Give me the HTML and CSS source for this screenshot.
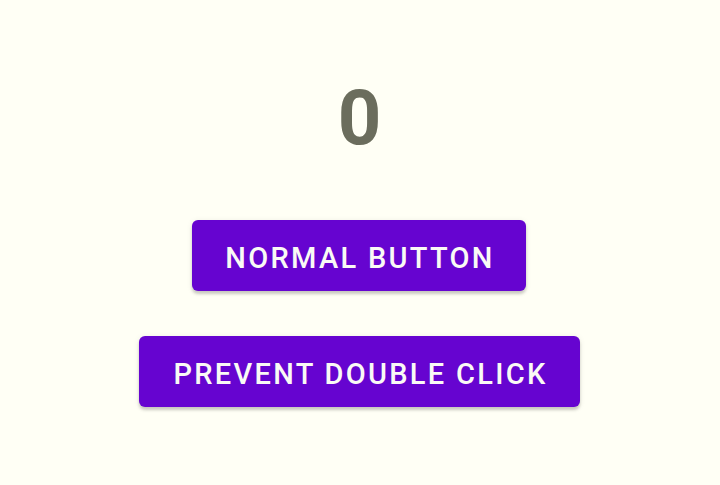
FILE: index.html
```html
<!DOCTYPE html>
<html>
<head>
<meta charset="utf-8">
<link rel="stylesheet" href="styles.css">
</head>
<body>
<main class="screen">
  <div class="counter">0</div>
  <button class="btn btn-normal">NORMAL BUTTON</button>
  <button class="btn btn-prevent">PREVENT DOUBLE CLICK</button>
</main>
</body>
</html>
```
FILE: styles.css
```css
html, body {
  margin: 0;
  padding: 0;
  background: #fffff5;
}
.screen {
  width: 720px;
  height: 485px;
  display: flex;
  flex-direction: column;
  align-items: center;
  font-family: Roboto, "Liberation Sans", sans-serif;
}
.counter {
  margin-top: 75px;
  margin-left: -1px;
  font-size: 76px;
  font-weight: 700;
  line-height: 86px;
  color: #6b6d5d;
}
.btn {
  height: 71px;
  border: none;
  border-radius: 6px;
  background: #6604d0;
  color: #fafaf5;
  font-family: Roboto, "Liberation Sans", sans-serif;
  font-weight: 500;
  font-size: 29px;
  letter-spacing: 2.3px;
  padding: 4px 0 0 2px;
  box-shadow: 0 3px 3px rgba(0,0,0,0.18), 0 1px 6px rgba(0,0,0,0.08);
}
.btn-normal {
  margin-top: 59px;
  margin-left: -2px;
  width: 334px;
}
.btn-prevent {
  margin-top: 45px;
  margin-left: -1px;
  width: 441px;
}
```
